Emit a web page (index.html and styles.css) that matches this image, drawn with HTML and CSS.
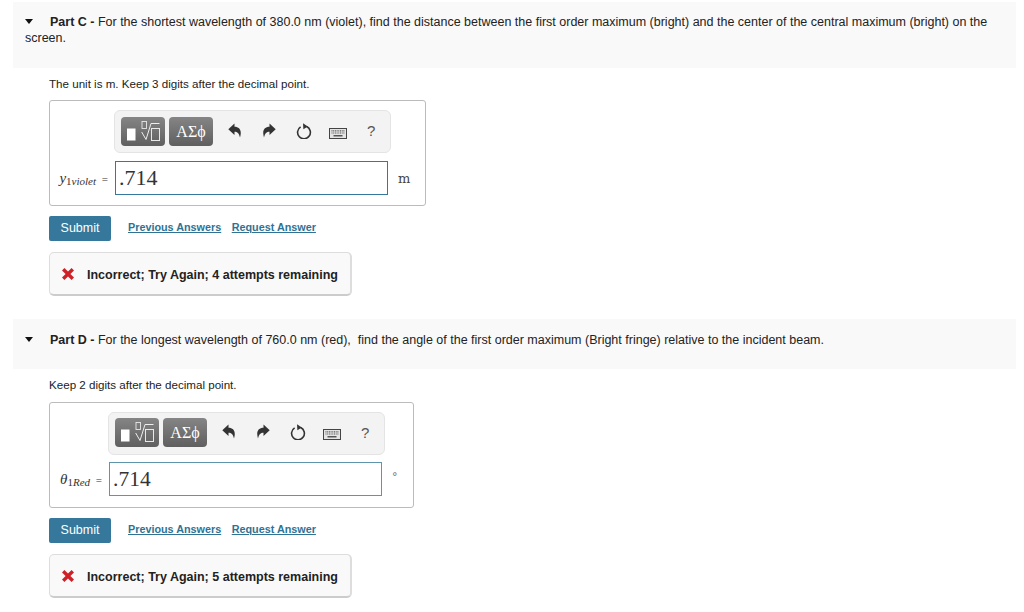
FILE: index.html
```html
<!DOCTYPE html>
<html lang="en">
<head>
    <meta charset="UTF-8">
    <title>Part C and D</title>
    <link rel="stylesheet" href="styles.css">
</head>
<body>

<svg class="defs" width="0" height="0">
  <symbol id="undo" viewBox="0 0 14 15"><path d="M0.3 6.2 L6.5 0.6 V3.8 C11.5 3.8 14.2 7.5 12 14.6 C11 10.4 9.4 8.8 6.5 8.8 V12 Z"/></symbol>
  <symbol id="redo" viewBox="0 0 14 15"><path d="M13.7 6.2 L7.5 0.6 V3.8 C2.5 3.8 -0.2 7.5 2 14.6 C3 10.4 4.6 8.8 7.5 8.8 V12 Z"/></symbol>
  <symbol id="reset" viewBox="0 0 16 16"><path d="M4.6 3.9 A6.4 6.4 0 1 0 10.6 3.5" fill="none" stroke="#333" stroke-width="1.6"/><path d="M7 0.2 L11.8 3.4 L7.4 6.2 Z"/></symbol>
  <symbol id="keys" viewBox="0 0 18 11"><rect x="0.5" y="0.5" width="17" height="10" fill="#e4e4e4" stroke="#444"/><path d="M2.5 2.8h13M2.5 5h13" stroke="#555" stroke-width="1.2" stroke-dasharray="1 .7"/><path d="M4.5 7.8h9" stroke="#333" stroke-width="1.2"/></symbol>
  <symbol id="templates" viewBox="0 0 44 24">
    <rect x="6" y="8.5" width="8.5" height="12" fill="#fff"/>
    <rect x="21" y="1.5" width="4.5" height="7" fill="none" stroke="#e8e8e8" stroke-width=".9"/>
    <path d="M20.7 12 L25 19.5 L30 3.5 H38.5" fill="none" stroke="#eee" stroke-width="1"/>
    <rect x="30.5" y="8.5" width="8" height="12" fill="none" stroke="#e8e8e8" stroke-width="1"/>
  </symbol>
  <symbol id="cross" viewBox="0 0 12 12"><path d="M0 2.4 L2.4 0 L6 3.6 L9.6 0 L12 2.4 L8.4 6 L12 9.6 L9.6 12 L6 8.4 L2.4 12 L0 9.6 L3.6 6 Z"/></symbol>
</svg>

<!-- Part C -->
<section class="part part-c">
  <div class="part-head">
    <p><span class="arrow"></span><b>Part C -</b> For the shortest wavelength of 380.0 nm (violet), find the distance between the first order maximum (bright) and the center of the central maximum (bright) on the screen.</p>
  </div>
  <div class="part-body">
    <p class="note">The unit is m. Keep 3 digits after the decimal point.</p>
    <div class="answer-box box-c">
      <div class="toolbar">
        <span class="tool tool-templates"><svg width="44" height="24"><use href="#templates"/></svg></span>
        <span class="tool tool-greek">ΑΣϕ</span>
        <svg class="ico ico-undo" width="14" height="15"><use href="#undo"/></svg>
        <svg class="ico ico-redo" width="14" height="15"><use href="#redo"/></svg>
        <svg class="ico ico-reset" width="16" height="16"><use href="#reset"/></svg>
        <svg class="ico ico-keys" width="18" height="11"><use href="#keys"/></svg>
        <span class="help">?</span>
      </div>
      <div class="answer-row">
        <span class="label"><i>y</i><span class="sub"><span class="digit">1</span><i>violet</i></span> <span class="eq">=</span></span>
        <div class="input">.714</div>
        <span class="unit">m</span>
      </div>
    </div>
    <div class="actions">
      <span class="submit">Submit</span>
      <a class="link first" href="#">Previous Answers</a>
      <a class="link" href="#">Request Answer</a>
    </div>
    <div class="feedback"><svg class="cross" width="12" height="12"><use href="#cross"/></svg>Incorrect; Try Again; 4 attempts remaining</div>
  </div>
</section>

<!-- Part D -->
<section class="part part-d">
  <div class="part-head">
    <p><span class="arrow"></span><b>Part D -</b> For the longest wavelength of 760.0 nm (red),&nbsp; find the angle of the first order maximum (Bright fringe) relative to the incident beam.</p>
  </div>
  <div class="part-body">
    <p class="note">Keep 2 digits after the decimal point.</p>
    <div class="answer-box box-d">
      <div class="toolbar">
        <span class="tool tool-templates"><svg width="44" height="24"><use href="#templates"/></svg></span>
        <span class="tool tool-greek">ΑΣϕ</span>
        <svg class="ico ico-undo" width="14" height="15"><use href="#undo"/></svg>
        <svg class="ico ico-redo" width="14" height="15"><use href="#redo"/></svg>
        <svg class="ico ico-reset" width="16" height="16"><use href="#reset"/></svg>
        <svg class="ico ico-keys" width="18" height="11"><use href="#keys"/></svg>
        <span class="help">?</span>
      </div>
      <div class="answer-row">
        <span class="label"><i>θ</i><span class="sub"><span class="digit">1</span><i>Red</i></span> <span class="eq">=</span></span>
        <div class="input">.714</div>
        <span class="unit deg">°</span>
      </div>
    </div>
    <div class="actions">
      <span class="submit">Submit</span>
      <a class="link first" href="#">Previous Answers</a>
      <a class="link" href="#">Request Answer</a>
    </div>
    <div class="feedback"><svg class="cross" width="12" height="12"><use href="#cross"/></svg>Incorrect; Try Again; 5 attempts remaining</div>
  </div>
</section>

</body>
</html>
```

FILE: styles.css
```css
body {
    font-family: "Liberation Sans", Arial, sans-serif;
    font-size: 12.5px;
    color: #222;
    background: #fff;
    margin: 0;
    padding: 2px 8px 0 13px;
}

p {
    margin: 0;
}

.defs {
    position: absolute;
}

.part-head {
    background: #f9f9f9;
    padding: 12px 20px 22px 12px;
    line-height: 16px;
}

.part-d {
    margin-top: 23px;
}

.part-d .part-head {
    padding: 13px 20px 21px 12px;
}

.arrow {
    display: inline-block;
    width: 0;
    height: 0;
    border-left: 4.5px solid transparent;
    border-right: 4.5px solid transparent;
    border-top: 5px solid #111;
    margin-right: 17px;
    vertical-align: 2px;
}

.part-body {
    padding: 0 0 0 36px;
}

.note {
    font-size: 11.6px;
    line-height: 16px;
    padding-top: 8px;
    margin-bottom: 8px;
}

.part-d .note {
    padding-top: 8px;
    margin-bottom: 9px;
}

.answer-box {
    box-sizing: border-box;
    height: 106px;
    border: 1px solid #bbb;
    border-radius: 3px;
    padding-top: 9px;
}

.box-c {
    width: 377px;
}

.box-d {
    width: 365px;
}

.toolbar {
    box-sizing: border-box;
    position: relative;
    width: 277px;
    height: 43px;
    background: #f3f3f3;
    border: 1px solid #e4e4e4;
    border-radius: 6px;
}

.box-c .toolbar {
    margin-left: 64px;
}

.box-d .toolbar {
    margin-left: 58px;
}

/* the toolbar buttons sit at fixed spots over the grey strip */
.tool {
    position: absolute;
    top: 6px;
    height: 29px;
    width: 44px;
    border-radius: 4px;
    background: linear-gradient(#858585, #5f5f5f);
    color: #fff;
    display: flex;
    align-items: center;
    justify-content: center;
}

.box-d .tool {
    top: 5px;
}

.tool-templates {
    left: 6px;
}

.tool-greek {
    left: 54px;
    font-family: "Liberation Serif", serif;
    font-size: 16px;
}

.ico {
    position: absolute;
    fill: #333;
}

.ico-undo {
    left: 113px;
    top: 12px;
}

.ico-redo {
    left: 147px;
    top: 12px;
}

.ico-reset {
    left: 181px;
    top: 12px;
}

.ico-keys {
    left: 214px;
    top: 17px;
}

.box-d .ico-undo,
.box-d .ico-redo,
.box-d .ico-reset {
    top: 11px;
}

.box-d .ico-keys {
    top: 16px;
}

.help {
    position: absolute;
    left: 252px;
    top: 11px;
    font-size: 15px;
    color: #555;
}

.answer-row {
    display: flex;
    align-items: center;
    margin-top: 8px;
}

.box-d .answer-row {
    margin-top: 7px;
}

.label {
    box-sizing: border-box;
    font-family: "Liberation Serif", serif;
    font-size: 15px;
    color: #333;
    text-align: right;
    padding-right: 7px;
    white-space: nowrap;
}

.box-c .label {
    width: 65px;
}

.box-d .label {
    width: 59px;
}

.sub {
    font-size: 11px;
    vertical-align: -2px;
}

.digit {
    font-style: normal;
}

.eq {
    font-size: 11px;
    margin-left: 2px;
}

.input {
    box-sizing: border-box;
    width: 273px;
    height: 34px;
    border: 1px solid #35789c;
    font-family: "Liberation Serif", serif;
    font-size: 22px;
    line-height: 32px;
    color: #333;
    padding-left: 3px;
    background: #fff;
}

.box-d .input {
    border-color: #5e94ac;
    font-size: 21.5px;
}

.unit {
    font-family: "DejaVu Serif", serif;
    font-size: 13px;
    color: #444;
    margin-left: 10px;
}

.deg {
    font-size: 11px;
    color: #777;
    margin-top: -3px;
}

.actions {
    display: flex;
    align-items: center;
    margin-top: 10px;
}

.submit {
    width: 62px;
    height: 25px;
    line-height: 25px;
    text-align: center;
    background: #35789c;
    color: #fff;
    border-radius: 2px;
}

.link {
    color: #2f7294;
    font-size: 10.8px;
    font-weight: bold;
    margin-left: 10.5px;
    margin-top: -3px;
}

.link.first {
    margin-left: 17px;
}

.feedback {
    box-sizing: border-box;
    width: 303px;
    height: 44px;
    margin-top: 11px;
    padding: 3px 0 0 12px;
    display: flex;
    align-items: center;
    background: #f9f9f9;
    border: 1px solid #ddd;
    border-bottom: 2px solid #ccc;
    border-right: 2px solid #ddd;
    border-radius: 5px;
    font-weight: bold;
    font-size: 12.5px;
}

.cross {
    fill: #cf2027;
    margin-right: 13px;
    margin-top: -3px;
}
```
